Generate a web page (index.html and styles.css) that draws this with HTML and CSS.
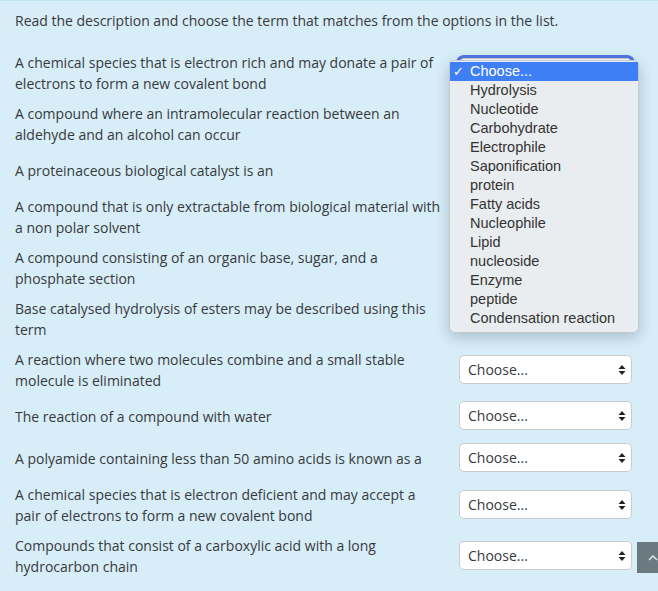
FILE: index.html
```html
<!DOCTYPE html>
<html lang="en">
<head>
    <meta charset="UTF-8">
    <title>Match the terms</title>
    <link rel="stylesheet" href="styles.css">
</head>
<body>
    <div class="formulation">
        <p class="qtext">Read the description and choose the term that matches from the options in the list.</p>
        <table class="answer">
            <tr>
                <td class="text">A chemical species that is electron rich and may donate a pair of electrons to form a new covalent bond</td>
                <td class="control">
                    <div class="select-wrap focused">
                        <select><option>Choose...</option></select>
                        <svg class="arrows" width="8" height="12" viewBox="0 0 8 12"><path d="M4 1 L7.5 5 H0.5 Z M4 11 L7.5 7 H0.5 Z" fill="#222"/></svg>
                        <ul class="popup">
                            <li class="selected"><span class="check">&#10003;</span>Choose...</li>
                            <li>Hydrolysis</li>
                            <li>Nucleotide</li>
                            <li>Carbohydrate</li>
                            <li>Electrophile</li>
                            <li>Saponification</li>
                            <li>protein</li>
                            <li>Fatty acids</li>
                            <li>Nucleophile</li>
                            <li>Lipid</li>
                            <li>nucleoside</li>
                            <li>Enzyme</li>
                            <li>peptide</li>
                            <li>Condensation reaction</li>
                        </ul>
                    </div>
                </td>
            </tr>
            <tr>
                <td class="text">A compound where an intramolecular reaction between an aldehyde and an alcohol can occur</td>
                <td class="control"><div class="select-wrap"><select><option>Choose...</option></select></div></td>
            </tr>
            <tr>
                <td class="text">A proteinaceous biological catalyst is an</td>
                <td class="control"><div class="select-wrap"><select><option>Choose...</option></select></div></td>
            </tr>
            <tr>
                <td class="text">A compound that is only extractable from biological material with a non polar solvent</td>
                <td class="control"><div class="select-wrap"><select><option>Choose...</option></select></div></td>
            </tr>
            <tr>
                <td class="text">A compound consisting of an organic base, sugar, and a phosphate section</td>
                <td class="control"><div class="select-wrap"><select><option>Choose...</option></select></div></td>
            </tr>
            <tr>
                <td class="text">Base catalysed hydrolysis of esters may be described using this term</td>
                <td class="control"><div class="select-wrap"><select><option>Choose...</option></select></div></td>
            </tr>
            <tr>
                <td class="text">A reaction where two molecules combine and a small stable molecule is eliminated</td>
                <td class="control">
                    <div class="select-wrap">
                        <select><option>Choose...</option></select>
                        <svg class="arrows" width="8" height="12" viewBox="0 0 8 12"><path d="M4 1 L7.5 5 H0.5 Z M4 11 L7.5 7 H0.5 Z" fill="#222"/></svg>
                    </div>
                </td>
            </tr>
            <tr>
                <td class="text">The reaction of a compound with water</td>
                <td class="control">
                    <div class="select-wrap">
                        <select><option>Choose...</option></select>
                        <svg class="arrows" width="8" height="12" viewBox="0 0 8 12"><path d="M4 1 L7.5 5 H0.5 Z M4 11 L7.5 7 H0.5 Z" fill="#222"/></svg>
                    </div>
                </td>
            </tr>
            <tr>
                <td class="text">A polyamide containing less than 50 amino acids is known as a</td>
                <td class="control">
                    <div class="select-wrap">
                        <select><option>Choose...</option></select>
                        <svg class="arrows" width="8" height="12" viewBox="0 0 8 12"><path d="M4 1 L7.5 5 H0.5 Z M4 11 L7.5 7 H0.5 Z" fill="#222"/></svg>
                    </div>
                </td>
            </tr>
            <tr>
                <td class="text">A chemical species that is electron deficient and may accept a pair of electrons to form a new covalent bond</td>
                <td class="control">
                    <div class="select-wrap">
                        <select><option>Choose...</option></select>
                        <svg class="arrows" width="8" height="12" viewBox="0 0 8 12"><path d="M4 1 L7.5 5 H0.5 Z M4 11 L7.5 7 H0.5 Z" fill="#222"/></svg>
                    </div>
                </td>
            </tr>
            <tr>
                <td class="text">Compounds that consist of a carboxylic acid with a long hydrocarbon chain</td>
                <td class="control">
                    <div class="select-wrap">
                        <select><option>Choose...</option></select>
                        <svg class="arrows" width="8" height="12" viewBox="0 0 8 12"><path d="M4 1 L7.5 5 H0.5 Z M4 11 L7.5 7 H0.5 Z" fill="#222"/></svg>
                    </div>
                </td>
            </tr>
        </table>
    </div>
    <a class="back-to-top" href="#">
        <svg width="10" height="6" viewBox="0 0 10 6"><path d="M1 5 L5 1 L9 5" fill="none" stroke="#e8eef0" stroke-width="1.3"/></svg>
    </a>
</body>
</html>
```

FILE: styles.css
```css
html, body {
    margin: 0;
    padding: 0;
    height: 100%;
}
body {
    font-family: "Open Sans", sans-serif;
    font-size: 14px;
    line-height: 21px;
    color: #373a3c;
    background-color: #d7edf7;
}
.formulation {
    border-top: 1px solid #bfe6f3;
    padding: 9px 15px 20px;
}
.qtext {
    margin: 0 0 16px;
}
.answer {
    border-collapse: collapse;
}
.answer td {
    padding: 5px 0 4px;
    vertical-align: middle;
}
.answer .text {
    width: 427px;
    padding-right: 17px;
}
.select-wrap {
    position: relative;
    width: 173px;
    margin: 1px 0 3px;
}
.select-wrap select {
    display: block;
    width: 173px;
    height: 29px;
    padding: 0 8px;
    font-family: "Open Sans", sans-serif;
    font-size: 14px;
    color: #373a3c;
    background-color: #fff;
    border: 1px solid #cbcbcb;
    border-radius: 5px;
    -webkit-appearance: none;
    appearance: none;
}
.select-wrap .arrows {
    position: absolute;
    right: 6px;
    top: 9px;
}
.select-wrap.focused select {
    box-shadow: 0 0 0 3px #4f74e3;
}
.popup {
    position: absolute;
    left: -10px;
    top: 2px;
    z-index: 10;
    width: 188px;
    margin: 0;
    padding: 1px 0 4px;
    list-style: none;
    background-color: #eaedef;
    border: 1px solid #c5cacd;
    border-radius: 6px;
    box-shadow: 0 4px 14px rgba(40, 70, 90, 0.28);
    font-family: "Liberation Sans", Arial, sans-serif;
    font-size: 14.5px;
    line-height: 19px;
    color: #333;
}
.popup li {
    position: relative;
    padding-left: 20px;
}
.popup li.selected {
    background-color: #3f7ff5;
    color: #fff;
}
.popup .check {
    position: absolute;
    left: 3px;
    font-family: "DejaVu Sans", sans-serif;
    font-size: 13px;
    font-weight: bold;
}
.back-to-top {
    position: fixed;
    right: -11px;
    bottom: 18px;
    width: 32px;
    height: 31px;
    background-color: #6a7a80;
    display: flex;
    align-items: center;
    justify-content: center;
}
```
